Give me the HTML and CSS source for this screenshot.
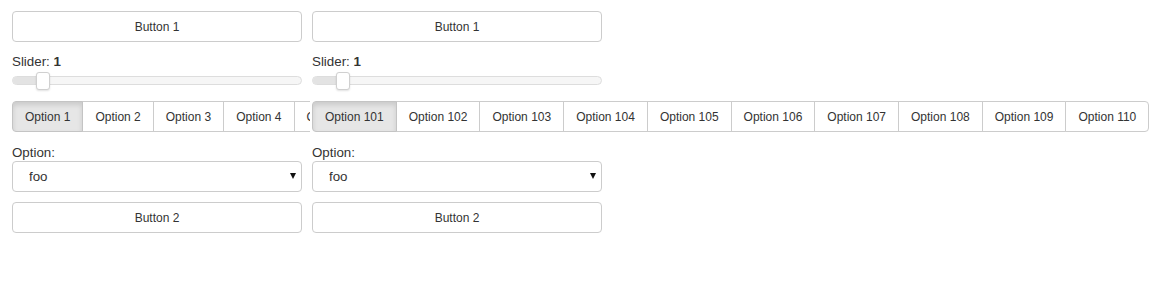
FILE: index.html
```html
<!DOCTYPE html>
<html>
<head>
  <meta charset="utf-8">
  <title>Controls</title>
  <link rel="stylesheet" href="styles.css">
</head>
<body>
  <div class="page">
    <div class="col">
      <button class="btn">Button 1</button>
      <div class="slider">
        <div class="slider-label">Slider: <b>1</b></div>
        <div class="track">
          <div class="fill"></div>
          <div class="handle"></div>
        </div>
      </div>
      <div class="group-wrap clip">
        <div class="btn-group">
          <button class="opt active">Option 1</button>
          <button class="opt">Option 2</button>
          <button class="opt">Option 3</button>
          <button class="opt">Option 4</button>
          <button class="opt">Option 5</button>
          <button class="opt">Option 6</button>
          <button class="opt">Option 7</button>
          <button class="opt">Option 8</button>
          <button class="opt">Option 9</button>
          <button class="opt">Option 10</button>
        </div>
      </div>
      <label class="field-label">Option:</label>
      <div class="select-wrap">
        <select class="select">
          <option>foo</option>
          <option>bar</option>
        </select>
      </div>
      <button class="btn btn-last">Button 2</button>
    </div>
    <div class="col">
      <button class="btn">Button 1</button>
      <div class="slider">
        <div class="slider-label">Slider: <b>1</b></div>
        <div class="track">
          <div class="fill"></div>
          <div class="handle"></div>
        </div>
      </div>
      <div class="group-wrap">
        <div class="btn-group">
          <button class="opt active">Option 101</button>
          <button class="opt">Option 102</button>
          <button class="opt">Option 103</button>
          <button class="opt">Option 104</button>
          <button class="opt">Option 105</button>
          <button class="opt">Option 106</button>
          <button class="opt">Option 107</button>
          <button class="opt">Option 108</button>
          <button class="opt">Option 109</button>
          <button class="opt">Option 110</button>
        </div>
      </div>
      <label class="field-label">Option:</label>
      <div class="select-wrap">
        <select class="select">
          <option>foo</option>
          <option>bar</option>
        </select>
      </div>
      <button class="btn btn-last">Button 2</button>
    </div>
  </div>
</body>
</html>
```

FILE: styles.css
```css
body {
  margin: 0;
  font-family: "Liberation Sans", Arial, sans-serif;
  font-size: 13.33px;
  color: #333;
  background: #fff;
}

.page {
  display: flex;
  align-items: flex-start;
  gap: 10px;
  padding: 11px 12px;
}

.col {
  display: flex;
  flex-direction: column;
  width: 290px;
  flex: none;
}

.btn {
  height: 31px;
  border: 1px solid #ccc;
  border-radius: 4px;
  background: #fff;
  color: #333;
  font-family: inherit;
  font-size: 12px;
  padding: 0;
}

.slider {
  margin-top: 12px;
}

.slider-label {
  line-height: 15px;
}

.slider-label b {
  font-weight: bold;
}

.track {
  position: relative;
  height: 9px;
  margin-top: 7px;
  border: 1px solid #ddd;
  border-radius: 5px;
  background: #f6f6f6;
  box-sizing: border-box;
}

.fill {
  position: absolute;
  left: 0;
  top: 0;
  bottom: 0;
  width: 28px;
  border-radius: 5px 0 0 5px;
  background: #e3e3e3;
}

.handle {
  position: absolute;
  left: 23px;
  top: -5px;
  width: 14px;
  height: 18px;
  box-sizing: border-box;
  border: 1px solid #d0d0d0;
  border-radius: 3px;
  background: #fff;
  box-shadow: 0 1px 2px rgba(0, 0, 0, 0.12);
}

.group-wrap {
  margin-top: 16px;
  width: 290px;
}

.group-wrap.clip {
  width: 298px;
  overflow: hidden;
}

.btn-group {
  display: flex;
  white-space: nowrap;
}

.opt {
  flex: none;
  height: 31px;
  padding: 0 12px;
  margin-left: -1px;
  border: 1px solid #ccc;
  background: #fff;
  color: #333;
  font-family: inherit;
  font-size: 12px;
}

.opt:first-child {
  margin-left: 0;
  border-radius: 4px 0 0 4px;
}

.opt:last-child {
  border-radius: 0 4px 4px 0;
}

.opt.active {
  position: relative;
  background: #e6e6e6;
  border-color: #c4c4c4;
  box-shadow: inset 0 3px 5px rgba(0, 0, 0, 0.12);
}

.field-label {
  display: block;
  margin-top: 13px;
  line-height: 16px;
}

.select-wrap {
  position: relative;
}

.select-wrap::after {
  content: "";
  position: absolute;
  right: 6px;
  top: 12px;
  border-left: 3.5px solid transparent;
  border-right: 3.5px solid transparent;
  border-top: 6px solid #111;
}

.select {
  display: block;
  width: 100%;
  height: 31px;
  padding: 0 0 0 16px;
  border: 1px solid #ccc;
  border-radius: 4px;
  background: #fff;
  color: #333;
  font-family: inherit;
  font-size: 13.33px;
  appearance: none;
  -webkit-appearance: none;
}

.btn-last {
  margin-top: 10px;
}
```
